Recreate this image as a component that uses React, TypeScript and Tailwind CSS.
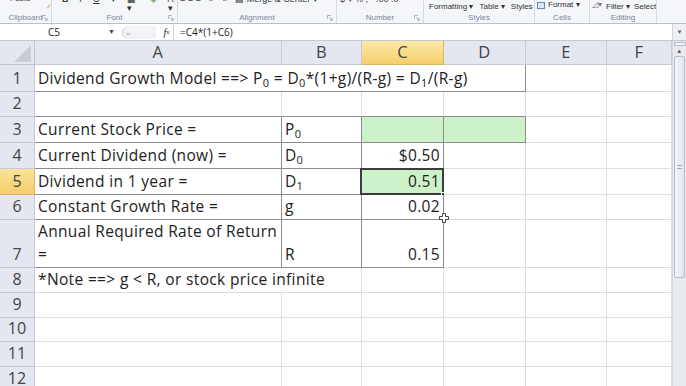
import React from 'react';

const COLS = [247, 80, 82, 82, 81, 65];
const COL_NAMES = ['A', 'B', 'C', 'D', 'E', 'F'];
const ROW_HEIGHTS = [27, 25, 26, 26, 26, 25, 48, 25, 25, 24, 25, 25];

const GRID = '#dcdfe6';
const DARK = '#8c8c8c';
const GREEN = '#cdf1c9';

type CellSpec = {
  span?: number;
  text?: React.ReactNode;
  align?: 'left' | 'right';
  right?: boolean;
  bottom?: boolean;
  fill?: string;
  selected?: boolean;
};

const Sub: React.FC<{ children: React.ReactNode }> = ({ children }) => (
  <sub className="text-[11px]">{children}</sub>
);

// one entry per row, cells left to right
const ROWS: CellSpec[][] = [
  [
    {
      span: 4,
      right: true,
      bottom: true,
      text: (
        <>
          Dividend Growth Model ==&gt; P<Sub>0</Sub> = D<Sub>0</Sub>*(1+g)/(R-g) = D<Sub>1</Sub>/(R-g)
        </>
      ),
    },
    {},
    {},
  ],
  [{ bottom: true }, { bottom: true }, { bottom: true }, { bottom: true }, {}, {}],
  [
    { text: 'Current Stock Price =', right: true, bottom: true },
    { text: <>P<Sub>0</Sub></>, right: true, bottom: true },
    { right: true, bottom: true, fill: GREEN },
    { right: true, bottom: true, fill: GREEN },
    {},
    {},
  ],
  [
    { text: 'Current Dividend (now) =', right: true, bottom: true },
    { text: <>D<Sub>0</Sub></>, right: true, bottom: true },
    { text: '$0.50', align: 'right', right: true, bottom: true },
    {},
    {},
    {},
  ],
  [
    { text: 'Dividend in 1 year =', right: true, bottom: true },
    { text: <>D<Sub>1</Sub></>, right: true, bottom: true },
    { text: '0.51', align: 'right', right: true, bottom: true, fill: GREEN, selected: true },
    {},
    {},
    {},
  ],
  [
    { text: 'Constant Growth Rate =', right: true, bottom: true },
    { text: 'g', right: true, bottom: true },
    { text: '0.02', align: 'right', right: true, bottom: true },
    {},
    {},
    {},
  ],
  [
    {
      text: (
        <span className="block leading-[23px]">
          Annual Required Rate of Return
          <br />=
        </span>
      ),
      right: true,
      bottom: true,
    },
    { text: 'R', right: true, bottom: true },
    { text: '0.15', align: 'right', right: true, bottom: true },
    {},
    {},
    {},
  ],
  [{ span: 2, text: '*Note ==> g < R, or stock price infinite' }, {}, {}, {}, {}],
  [{}, {}, {}, {}, {}, {}],
  [{}, {}, {}, {}, {}, {}],
  [{}, {}, {}, {}, {}, {}],
  [{}, {}, {}, {}, {}, {}],
];

const Launcher = () => (
  <svg width="6" height="6" viewBox="0 0 7 7" className="shrink-0">
    <path d="M0.5 0.5h4M0.5 0.5v4" stroke="#9aa3b2" strokeWidth="1" fill="none" />
    <path d="M2.5 2.5l3.5 3.5M6 3.5v2.5h-2.5" stroke="#9aa3b2" strokeWidth="1" fill="none" />
  </svg>
);

const GROUPS = [
  { label: 'Clipboard', w: 52, launcher: true },
  { label: 'Font', w: 126, launcher: true },
  { label: 'Alignment', w: 159, launcher: true },
  { label: 'Number', w: 87, launcher: true },
  { label: 'Styles', w: 111, launcher: false },
  { label: 'Cells', w: 55, launcher: false },
  { label: 'Editing', w: 67, launcher: false },
];

const Ribbon = () => (
  <div className="h-[24px] flex bg-[#f4f6fa] border-b border-[#b9c0cc] text-[8px] tracking-normal text-[#7a879a] overflow-hidden font-['Liberation_Sans',sans-serif]">
    {GROUPS.map((g) => (
      <div
        key={g.label}
        className="flex flex-col border-r border-[#d4d9e2] shrink-0"
        style={{ width: g.w }}
      >
        <div className="h-[13px] relative overflow-hidden">
          {g.label === 'Clipboard' && (
            <div className="flex items-start gap-[16px] pl-[10px] text-[#444] leading-none">
              <span className="-mt-[5px]">Paste</span>
              <svg width="10" height="10" viewBox="0 0 10 10" className="mt-[1px]">
                <path d="M2 9l5-6 1.5 1.5-5 6z" fill="#e0b040" />
                <path d="M7 3l1.5-2 1 1-1.5 2z" fill="#777" />
              </svg>
            </div>
          )}
          {g.label === 'Font' && (
            <div className="flex gap-[11px] pl-[10px] -mt-[5px] text-[#333] text-[9px] leading-none">
              <b>B</b>
              <i>I</i>
              <u>U</u>
              <span>▾</span>
              <span>▦ ▾</span>
              <span className="text-[#6a4]">◈</span>
              <span>A ▾</span>
            </div>
          )}
          {g.label === 'Alignment' && (
            <div className="flex gap-[8px] pl-[2px] -mt-[5px] text-[#444] text-[9px] leading-none whitespace-nowrap">
              <span>≡ ≡ ≡</span>
              <span>⇤ ⇥</span>
              <span className="text-[#333]">▤ Merge &amp; Center ▾</span>
            </div>
          )}
          {g.label === 'Number' && (
            <div className="flex gap-[8px] pl-[3px] -mt-[5px] text-[#444] text-[9px] leading-none whitespace-nowrap">
              <span>$ ▾ % ,</span>
              <span>.00 .0</span>
            </div>
          )}
          {g.label === 'Styles' && (
            <div className="pl-[5px] text-[#333] leading-none whitespace-nowrap pt-[3px] flex gap-[6px]">
              <span>Formatting ▾</span>
              <span>Table ▾</span>
              <span>Styles ▾</span>
            </div>
          )}
          {g.label === 'Cells' && (
            <div className="flex items-center gap-[3px] pl-[2px] pt-[1px] text-[#333] leading-none whitespace-nowrap">
              <span className="w-[8px] h-[7px] border border-[#6d86b0] bg-[#dfe8f5]" />
              <span>Format ▾</span>
            </div>
          )}
          {g.label === 'Editing' && (
            <div className="pl-[2px] pt-[3px] text-[#333] leading-none whitespace-nowrap flex gap-[4px]">
              <span className="-mt-[2px] text-[#777]">◿▾</span>
              <span>Filter ▾</span>
              <span>Select ▾</span>
            </div>
          )}
        </div>
        <div className="h-[10px] flex items-center justify-center relative leading-none">
          <span>{g.label}</span>
          {g.launcher && (
            <span className="absolute right-[3px] top-[2px]">
              <Launcher />
            </span>
          )}
        </div>
      </div>
    ))}
    <div className="flex-1" />
  </div>
);

const FormulaBar = () => (
  <div className="h-[17px] flex items-stretch bg-white border-b border-[#c4c9d4] text-[10px] tracking-normal text-[#222] font-['Open_Sans',sans-serif]">
    <div className="w-[120px] flex items-center relative">
      <span className="ml-[48px]">C5</span>
      <span className="absolute right-[5px] text-[7px] text-[#444]">▼</span>
    </div>
    <div className="w-[40px] flex items-center">
      <div className="ml-[2px] w-[34px] h-[13px] rounded-l-full border-l border-[#c7ccd6] bg-[#f1f3f6] text-[8px] text-[#aaa] pl-[3px] leading-[13px]">
        =
      </div>
    </div>
    <div className="w-[14px] flex items-center justify-center border-r border-[#d0d4dc] font-['Liberation_Serif',serif] text-[10px]">
      <i>f</i>
      <i className="text-[7px]">x</i>
    </div>
    <div className="flex-1 flex items-center pl-[6px]">=C4*(1+C6)</div>
    <div className="w-[14px] flex items-center justify-center text-[6px] text-[#666] border-l border-[#d0d4dc] bg-[#eef0f4]">
      ▼
    </div>
  </div>
);

const HeaderRow = () => (
  <div className="flex h-[24px]">
    <div className="w-[35px] shrink-0 bg-[#e4e7f0] border-r border-b border-[#bfc5d2] relative overflow-hidden">
      <svg width="35" height="24" className="absolute inset-0">
        <polygon points="31,4 31,21 14,21" fill="#c9ccd4" />
      </svg>
    </div>
    {COL_NAMES.map((c, i) => (
      <div
        key={c}
        className={`shrink-0 flex items-center justify-center border-r border-b text-[16.5px] text-[#444] ${
          c === 'C'
            ? 'bg-gradient-to-b from-[#fce9a4] to-[#f6cf6d] border-[#d9b864]'
            : 'bg-[#e4e7f0] border-[#c4cad6]'
        }`}
        style={{ width: COLS[i] }}
      >
        {c}
      </div>
    ))}
  </div>
);

const Cell: React.FC<{ spec: CellSpec; width: number; height: number }> = ({ spec, width, height }) => (
  <div
    className={`shrink-0 relative flex items-end pb-[1px] px-[3px] whitespace-nowrap border-r border-b ${
      spec.align === 'right' ? 'justify-end' : 'justify-start'
    }`}
    style={{
      width,
      height,
      borderRightColor: spec.right ? DARK : GRID,
      borderBottomColor: spec.bottom ? DARK : GRID,
      background: spec.fill ?? '#ffffff',
    }}
  >
    <span>{spec.text}</span>
    {spec.selected && (
      <>
        <div className="absolute -left-[2px] -top-[1px] -right-[1px] -bottom-[1px] border-2 border-[#3c3c3c] pointer-events-none" />
        <div className="absolute -right-[4px] -bottom-[4px] w-[6px] h-[6px] bg-[#3c3c3c] border border-white" />
      </>
    )}
  </div>
);

const Sheet = () => (
  <div className="flex-1 flex flex-col overflow-hidden">
    <HeaderRow />
    {ROWS.map((row, r) => {
      const h = ROW_HEIGHTS[r];
      let col = 0;
      return (
        <div key={r} className="flex" style={{ height: h }}>
          <div
            className={`w-[35px] shrink-0 flex items-end justify-center pb-[1px] border-r border-b text-[16px] tracking-normal text-[#444] ${
              r === 4
                ? 'bg-gradient-to-b from-[#fbe39a] to-[#f5cd6a] border-[#d9b864]'
                : 'bg-[#e4e7f0] border-[#c4cad6]'
            }`}
          >
            {r + 1}
          </div>
          {row.map((spec, i) => {
            const span = spec.span ?? 1;
            const width = COLS.slice(col, col + span).reduce((a, b) => a + b, 0);
            col += span;
            return <Cell key={i} spec={spec} width={width} height={h} />;
          })}
        </div>
      );
    })}
  </div>
);

const ScrollBar = () => (
  <div className="w-[14px] shrink-0 bg-[#e9eaef] border-l border-[#d5d8e0] flex flex-col items-center">
    <div className="w-[12px] h-[4px] mt-[1px] border border-[#b8bcc6] bg-[#f4f5f8]" />
    <div className="h-[10px] flex items-center text-[6px] text-[#555]">▲</div>
    <div className="w-[11px] h-[222px] rounded-[2px] border border-[#b8bcc8] bg-gradient-to-r from-[#f5f6f9] to-[#e1e3ea] flex items-center justify-center">
      <div className="w-[5px] h-[4px] border-y border-[#a0a5b0]" />
    </div>
  </div>
);

// the + cursor hovering near C6
const Cursor = () => (
  <svg width="10" height="10" viewBox="0 0 10 10" className="absolute left-[439px] top-[213px]">
    <path d="M3.5 0.5h3v3h3v3h-3v3h-3v-3h-3v-3h3z" fill="#fff" stroke="#444" strokeWidth="1" />
  </svg>
);

export default function App() {
  return (
    <div className="w-[686px] h-[386px] overflow-hidden bg-white relative font-['Open_Sans',sans-serif] text-[15.5px] tracking-[0.35px] text-[#222] flex flex-col">
      <Ribbon />
      <FormulaBar />
      <div className="flex-1 flex overflow-hidden">
        <Sheet />
        <ScrollBar />
      </div>
      <Cursor />
    </div>
  );
}
